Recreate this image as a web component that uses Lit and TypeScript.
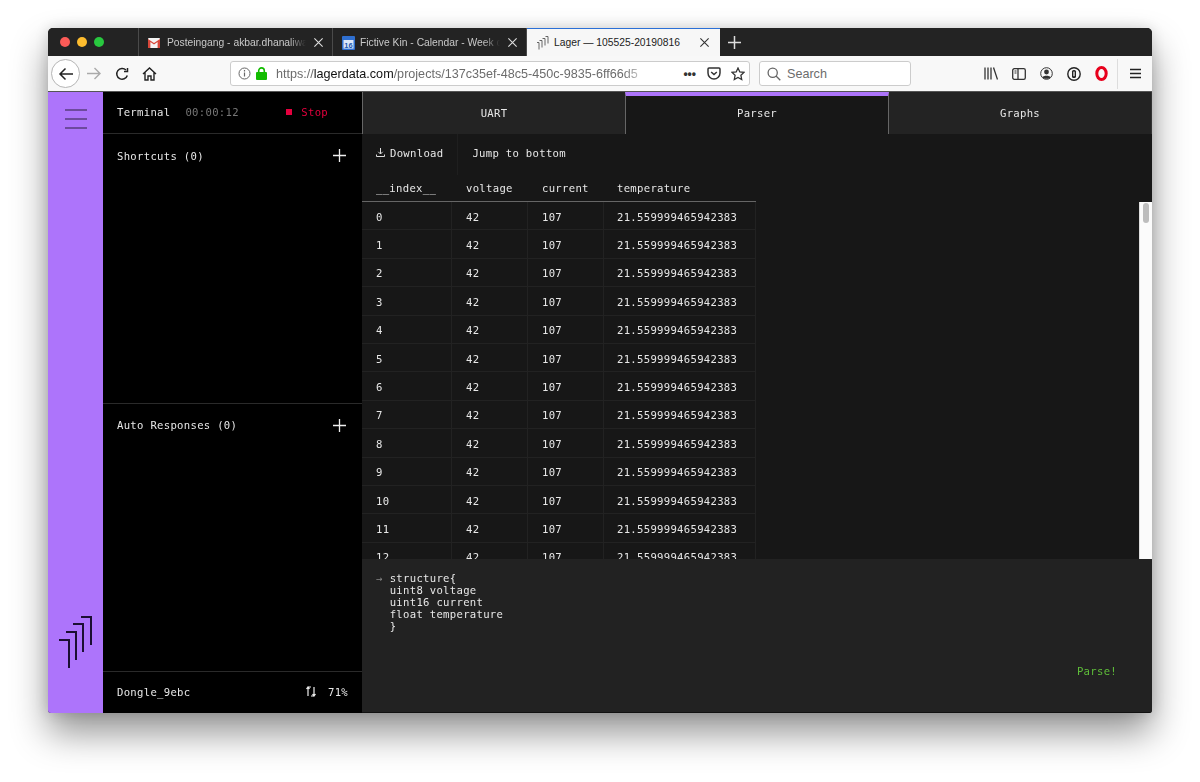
import { LitElement, html, css, svg } from "lit";
import { customElement } from "lit/decorators.js";

const closeX = svg`<svg class="x" width="11" height="11" viewBox="0 0 12 12"><path d="M1.500 1.500l9 9M10.500 1.500l-9 9" stroke="currentColor" stroke-width="1.200" fill="none"/></svg>`;
const plus = svg`<svg class="plus" width="13" height="13" viewBox="0 0 13 13"><path d="M6.500 0v13M0 6.500h13" stroke="#eee" stroke-width="1.300"/></svg>`;
const rows = Array.from({ length: 13 }, (_, i) => i);

@customElement("app-root")
export class AppRoot extends LitElement {
  static styles = css`
    :host { display: block; height: 782px; box-sizing: border-box; padding: 28px 48px 69px; background: #fff; overflow: hidden; font-family: "Liberation Sans", Arial, sans-serif; }
    * { box-sizing: border-box; }
    .window { height: 685px; border-radius: 5px 5px 3px 3px; display: flex; flex-direction: column; box-shadow: 0 20px 36px rgba(0,0,0,.42), 0 0 14px rgba(0,0,0,.14); overflow: hidden; background: #222; }
    .titlebar { height: 28px; flex: none; background: #232323; display: flex; align-items: stretch; color: #c9c9c9; font-size: 10.3px; }
    .lights { width: 91px; display: flex; align-items: center; gap: 7px; padding-left: 12px; flex: none; border-right: 1px solid #4a4a4a; }
    .lights i { width: 10px; height: 10px; border-radius: 50%; display: block; }
    .tab { width: 194px; flex: none; display: flex; align-items: center; padding: 1px 8px 0 9px; gap: 7px; border-right: 1px solid #4a4a4a; white-space: nowrap; }
    .tab .t { flex: 1; overflow: hidden; -webkit-mask-image: linear-gradient(90deg,#000 88%,transparent); mask-image: linear-gradient(90deg,#000 88%,transparent); }
    .tab .x { flex: none; color: #ddd; }
    .tab .cal { margin-right: -2px; }
    .tab.active { background: #f7f7f7; color: #222; border-right: none; border-top: 1px solid #2b6fd6; width: 193px; padding: 0 10px 0 10px; gap: 5px; }
    .tab.active .t { -webkit-mask-image: none; mask-image: none; }
    .tab.active .x { color: #333; }
    .newtab { width: 28px; display: flex; align-items: center; justify-content: center; color: #ddd; }
    .toolbar { height: 36px; flex: none; background: #f8f8f8; border-bottom: 1px solid #555; display: flex; align-items: center; color: #333; }
    .back { width: 29px; height: 29px; margin-left: 3px; border: 1px solid #b5b5b5; border-radius: 50%; background: #fff; display: flex; align-items: center; justify-content: center; flex: none; }
    .navi { flex: none; display: block; }
    .fwd { margin-left: 6px; }
    .reload { margin-left: 14px; }
    .home { margin-left: 13px; }
    .urlbar { margin-left: 73px; width: 520px; height: 25px; flex: none; background: #fff; border: 1px solid #ccc; border-radius: 3px; display: flex; align-items: center; font-size: 12.6px; color: #6c6c6c; padding: 0 4px 0 7px; }
    .lock { margin-left: 5px; flex: none; }
    .urltext { width: 373px; margin-left: 9px; overflow: hidden; white-space: nowrap; -webkit-mask-image: linear-gradient(90deg,#000 93%,transparent); mask-image: linear-gradient(90deg,#000 93%,transparent); }
    .urltext b { font-weight: 400; color: #111; }
    .urlright { margin-left: auto; display: flex; align-items: center; gap: 10px; }
    .dots { font-weight: 700; color: #333; font-size: 12px; margin-right: 1px; }
    .search { margin-left: 9px; width: 152px; height: 25px; flex: none; background: #fff; border: 1px solid #ccc; border-radius: 3px; display: flex; align-items: center; gap: 6px; padding: 0 7px; font-size: 12.6px; color: #6c6c6c; }
    .tools { flex: 1; display: flex; align-items: center; justify-content: flex-end; gap: 14px; padding-right: 11px; }
    .sep { width: 1px; height: 30px; background: #ddd; margin: 0 -2px 0 -5px; }
    .app { flex: 1; min-height: 0; display: flex; opacity: .999; font-family: "DejaVu Sans Mono", "Liberation Mono", monospace; font-size: 10.6px; letter-spacing: .3px; color: #e8e8e8; }
    .rail { width: 55px; flex: none; background: #ad74fb; display: flex; flex-direction: column; justify-content: space-between; align-items: center; }
    .burger { margin-top: 17px; width: 22px; display: flex; flex-direction: column; gap: 7px; }
    .burger i { display: block; height: 2px; background: #6d4a9e; }
    .logo { margin: 0 0 43px 0; display: block; }
    .side { width: 259px; flex: none; background: #000; display: flex; flex-direction: column; }
    .sidehead { height: 42px; flex: none; display: flex; align-items: center; padding: 0 34px 2px 14px; border-bottom: 1px solid #2a2a2a; }
    .time { color: #777; margin-left: 15px; }
    .stop { margin-left: auto; color: #e5003e; display: flex; align-items: center; gap: 9px; }
    .stop i { width: 6px; height: 6px; background: #e5003e; display: block; }
    .sec { flex: none; padding: 15px 16px 0 14px; display: flex; justify-content: space-between; align-items: flex-start; }
    .s1 { height: 270px; border-bottom: 1px solid #2a2a2a; padding-top: 16px; }
    .s1 .plus { margin-top: -1px; }
    .s2 { flex: 1; }
    .plus { display: block; }
    .sidefoot { height: 42px; flex: none; border-top: 1px solid #2a2a2a; padding: 0 14px 2px; display: flex; align-items: center; }
    .sync { margin-left: auto; margin-right: 12px; display: block; }
    .main { flex: 1; min-width: 0; display: flex; flex-direction: column; background: #171717; }
    .tabs { height: 42px; flex: none; display: flex; }
    .ptab { flex: 1; background: #232323; border-left: 1px solid #666; display: flex; align-items: center; justify-content: center; }
    .ptab.on { background: #171717; border-top: 4px solid #ad74fb; border-right: 1px solid #666; padding-bottom: 4px; }
    .ptab.last { border-left: none; border-right: 1px solid #333; }
    .actions { height: 41px; flex: none; display: flex; align-items: stretch; }
    .act { display: flex; align-items: center; gap: 5px; padding: 0 14px 4px; border-right: 1px solid #1f1f1f; }
    .act + .act { border-right: none; }
    .scroller { flex: 1; min-height: 0; display: flex; }
    .tablewrap { flex: 1; min-width: 0; overflow: hidden; }
    .grid { width: 394px; display: grid; grid-template-columns: 90px 76px 76px 152px; }
    .grid span { height: 28.4px; display: flex; align-items: center; padding: 2px 0 0 14px; border-right: 1px solid #222; border-bottom: 1px solid #222; white-space: nowrap; }
    .grid span.h { height: 27px; border-right: none; border-bottom: 1px solid #666; padding-top: 0; }
    .grid span.last { padding-left: 13px; }
    .track { width: 13px; flex: none; margin-top: 27px; background: #fbfbfb; border-left: 1px solid #ddd; padding: 1px 0 0 3px; }
    .thumb { width: 6px; height: 20px; border-radius: 3px; background: #bdbdbd; display: block; }
    .editor { height: 154px; flex: none; background: #222; position: relative; padding: 13px 14px; display: flex; gap: 7px; line-height: 12px; border-bottom: 1px solid #111; }
    .arrow { color: #888; }
    .code { white-space: pre; }
    .parse { position: absolute; right: 35px; bottom: 35px; color: #5fbf3a; }
  `;

  render() {
    return html`<div class="window">
      <div class="titlebar">
        <div class="lights"><i style="background:#fc5b57"></i><i style="background:#fdbc2e"></i><i style="background:#28c83f"></i></div>
        <div class="tab">
          <svg width="12" height="10" viewBox="0 0 12 10"><rect width="12" height="10" rx="1" fill="#f4f4f4"/><path d="M0 1v9h2.400V4L6 6.600 9.600 4v6H12V1L6 5z" fill="#d8473a"/></svg>
          <span class="t">Posteingang - akbar.dhanaliwala</span>${closeX}
        </div>
        <div class="tab">
          <svg class="cal" width="13" height="14" viewBox="0 0 13 14"><rect width="13" height="14" rx="1" fill="#2f6fd0"/><rect x="1.500" y="4" width="10" height="8.600" fill="#dce7f8"/><text x="6.500" y="11.500" font-size="7.500" font-weight="700" text-anchor="middle" fill="#2258b0" font-family="Liberation Sans">16</text></svg>
          <span class="t">Fictive Kin - Calendar - Week of Aug</span>${closeX}
        </div>
        <div class="tab active">
          <svg width="12" height="14" viewBox="0 0 12 14" fill="none" stroke="#555" stroke-width=".9"><path d="M0 6.500h2v7M2.500 4.500h2.500v7M5.500 2.500h2.500v7M8.500.5h2.500v7"/></svg>
          <span class="t">Lager — 105525-20190816</span>${closeX}
        </div>
        <div class="newtab"><svg width="13" height="13" viewBox="0 0 13 13"><path d="M6.500 0v13M0 6.500h13" stroke="currentColor" stroke-width="1.500"/></svg></div>
      </div>
      <div class="toolbar">
        <div class="back"><svg width="16" height="14" viewBox="0 0 16 14" fill="none" stroke="#222" stroke-width="1.500"><path d="M15 7H2M7.500 1.500L2 7l5.500 5.500"/></svg></div>
        <svg class="navi fwd" width="15" height="13" viewBox="0 0 15 13" fill="none" stroke="#aaa" stroke-width="1.400"><path d="M1 6.500h13M8.500 1L14 6.500 8.500 12"/></svg>
        <svg class="navi reload" width="14" height="14" viewBox="0 0 14 14" fill="none" stroke="#222" stroke-width="1.500"><path d="M12.300 8.500A5.400 5.400 0 1 1 11 3"/><path d="M12.500 1v3.400H9"/></svg>
        <svg class="navi home" width="15" height="14" viewBox="0 0 15 14" fill="none" stroke="#222" stroke-width="1.400"><path d="M1 7l6.500-6L14 7M3 5.500V13h3V9h3v4h3V5.500"/></svg>
        <div class="urlbar">
          <svg width="13" height="13" viewBox="0 0 13 13" fill="none" stroke="#666"><circle cx="6.500" cy="6.500" r="5.500"/><path d="M6.500 5.500v4M6.500 3v1.400" stroke-width="1.200"/></svg>
          <svg class="lock" width="11" height="13" viewBox="0 0 11 13"><rect y="5" width="11" height="8" rx="1" fill="#12bc00"/><path d="M2.700 6V3.700a2.800 2.800 0 0 1 5.600 0V6" fill="none" stroke="#12bc00" stroke-width="1.600"/></svg>
          <span class="urltext">https://<b>lagerdata.com</b>/projects/137c35ef-48c5-450c-9835-6ff66d5</span>
          <div class="urlright">
            <span class="dots">•••</span>
            <svg width="14" height="13" viewBox="0 0 14 13" fill="none" stroke="#333" stroke-width="1.500"><path d="M2 1h10a1 1 0 0 1 1 1v4a6 6 0 0 1-12 0V2a1 1 0 0 1 1-1z"/><path d="M4.200 5L7 7.600 9.800 5"/></svg>
            <svg width="14" height="14" viewBox="0 0 14 14" fill="none" stroke="#333" stroke-width="1.300"><path d="M7 1l1.800 3.900 4.200.5-3.100 2.900.8 4.200L7 10.400 3.300 12.500l.8-4.200L1 5.400l4.200-.5z"/></svg>
          </div>
        </div>
        <div class="search">
          <svg width="14" height="14" viewBox="0 0 14 14" fill="none" stroke="#666" stroke-width="1.300"><circle cx="5.700" cy="5.700" r="4.600"/><path d="M9 9l4.300 4.300"/></svg>
          <span>Search</span>
        </div>
        <div class="tools">
          <svg width="14" height="13" viewBox="0 0 14 13" fill="none" stroke="#333" stroke-width="1.300"><path d="M1 .5v12M4 .5v12M7 .5v12M9.500.5l4 12"/></svg>
          <svg width="14" height="12" viewBox="0 0 14 12" fill="none" stroke="#333" stroke-width="1.300"><rect x=".7" y=".7" width="12.600" height="10.600" rx="1.600"/><path d="M6 .7v10.600"/><path d="M2.500 3h2M2.500 5h2" stroke-width="1"/></svg>
          <svg width="13" height="13" viewBox="0 0 13 13"><circle cx="6.500" cy="6.500" r="5.800" fill="none" stroke="#333"/><circle cx="6.500" cy="5" r="2.400" fill="#333"/><path d="M2.400 10.300c1-2 7.200-2 8.200 0-2 2-6.200 2-8.200 0z" fill="#333"/></svg>
          <svg width="14" height="14" viewBox="0 0 14 14" fill="none"><circle cx="7" cy="7" r="6.200" stroke="#222" stroke-width="1.400"/><rect x="5" y="3" width="4" height="8" rx="1.600" fill="#222"/><rect x="6.400" y="4.600" width="1.200" height="4.600" fill="#fff"/></svg>
          <svg width="13" height="15" viewBox="0 0 13 15" fill="none"><ellipse cx="6.500" cy="7.500" rx="4.700" ry="6" stroke="#e8001c" stroke-width="3"/></svg>
          <span class="sep"></span>
          <svg width="11" height="11" viewBox="0 0 11 11" stroke="#222" stroke-width="1.300"><path d="M0 1.500h11M0 5.500h11M0 9.500h11"/></svg>
        </div>
      </div>
      <div class="app">
        <div class="rail">
          <div class="burger"><i></i><i></i><i></i></div>
          <svg class="logo" width="34" height="54" viewBox="0 0 34 54" fill="none" stroke="#1c0f33" stroke-width="2"><path d="M0 24h10v28M7 16h10v28M14 8h10v28M22 1h10v28"/></svg>
        </div>
        <div class="side">
          <div class="sidehead"><span>Terminal</span><span class="time">00:00:12</span><span class="stop"><i></i>Stop</span></div>
          <div class="sec s1"><span>Shortcuts (0)</span>${plus}</div>
          <div class="sec s2"><span>Auto Responses (0)</span>${plus}</div>
          <div class="sidefoot"><span>Dongle_9ebc</span>
            <svg class="sync" width="10" height="11" viewBox="0 0 10 11" fill="none" stroke="#eee" stroke-width="1.200"><path d="M2 10V1h3M.5 3L2 1 3.500 3M8 1v9H5M6.500 8L8 10 9.500 8"/></svg>
            <span>71%</span></div>
        </div>
        <div class="main">
          <div class="tabs">
            <div class="ptab">UART</div>
            <div class="ptab on">Parser</div>
            <div class="ptab last">Graphs</div>
          </div>
          <div class="actions">
            <div class="act"><svg width="9" height="9" viewBox="0 0 9 9" fill="none" stroke="#ddd"><path d="M4.500 0v6M2.300 3.800l2.200 2.200 2.200-2.200M.5 6.500v2h8v-2"/></svg><span>Download</span></div>
            <div class="act">Jump to bottom</div>
          </div>
          <div class="scroller">
            <div class="tablewrap">
              <div class="grid">
                <span class="h">__index__</span><span class="h">voltage</span><span class="h">current</span><span class="h last">temperature</span>
                ${rows.map((i) => html`<span>${i}</span><span>42</span><span>107</span><span class="last">21.559999465942383</span>`)}
              </div>
            </div>
            <div class="track"><i class="thumb"></i></div>
          </div>
          <div class="editor">
            <span class="arrow">→</span>
            <div class="code">structure{
uint8 voltage
uint16 current
float temperature
}</div>
            <span class="parse">Parse!</span>
          </div>
        </div>
      </div>
    </div>`;
  }
}
